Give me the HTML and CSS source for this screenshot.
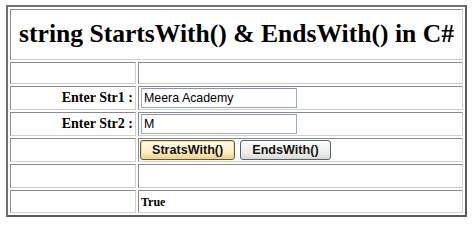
FILE: index.html
```html
<!DOCTYPE html>
<html>
<head>
<meta charset="utf-8">
<link rel="stylesheet" href="styles.css">
</head>
<body>
<div class="panel">
  <h1 class="cell title">string StartsWith() &amp; EndsWith() in C#</h1>
  <div class="cell"></div><div class="cell"></div>
  <label class="cell label" for="s1">Enter Str1 :</label>
  <div class="cell field"><input id="s1" class="text" type="text" value="Meera Academy"></div>
  <label class="cell label" for="s2">Enter Str2 :</label>
  <div class="cell field"><input id="s2" class="text" type="text" value="M"></div>
  <div class="cell"></div>
  <div class="cell field buttons">
    <button class="btn btn-hot" type="button">StratsWith()</button>
    <button class="btn" type="button">EndsWith()</button>
  </div>
  <div class="cell"></div><div class="cell"></div>
  <div class="cell"></div><div class="cell result">True</div>
</div>
</body>
</html>
```
FILE: styles.css
```css
html, body {
  margin: 0;
  padding: 0;
  background: #ffffff;
}
body {
  padding: 5px 0 0 6px;
  font-family: "Liberation Serif", "Times New Roman", serif;
}
.panel {
  display: grid;
  grid-template-columns: 126px 325px;
  grid-template-rows: 51px 22px 24px 24px 24px 24px 23px;
  gap: 2px;
  padding: 2px;
  width: max-content;
  border: 2px solid #6f6f6f;
  border-right-color: #5a5a5a;
  border-bottom-color: #5a5a5a;
}
.cell {
  box-sizing: border-box;
  margin: 0;
  border: 1px solid;
  border-color: #8a8a8a #cfcfcf #cfcfcf #8a8a8a;
  display: flex;
  align-items: center;
  padding: 0 2px;
  color: #000;
  font-family: "Liberation Serif", "Times New Roman", serif;
}
.title {
  grid-column: 1 / span 2;
  justify-content: center;
  font-size: 25.6px;
  font-weight: bold;
  padding-bottom: 2px;
}
.label {
  justify-content: flex-end;
  font-size: 14px;
  font-weight: bold;
  padding-right: 2px;
}
.field {
  padding-left: 2px;
}
.text {
  box-sizing: border-box;
  width: 156px;
  height: 20px;
  margin: 0;
  padding: 0 2px;
  border: 1px solid #9aabc0;
  border-top-color: #8696ab;
  background: #fff;
  font-family: "Liberation Sans", Arial, sans-serif;
  font-size: 12.4px;
  color: #000;
  outline: none;
}
.buttons {
  gap: 5px;
  padding-left: 1px;
}
.btn {
  box-sizing: border-box;
  height: 20px;
  margin: 0;
  padding: 0 11px;
  border: 1px solid #4f6378;
  border-radius: 3px;
  background: linear-gradient(#fdfdfb, #ecebe6 70%, #d8d7d0);
  font-family: "Liberation Sans", Arial, sans-serif;
  font-size: 12.6px;
  font-weight: bold;
  color: #111;
  line-height: 18px;
}
.btn-hot {
  border-color: #5e5a4a;
  background: linear-gradient(#fffbea, #fdefc4 60%, #f3cf7a);
  box-shadow: inset 0 0 0 1px #f8d98c;
}
.result {
  font-size: 12px;
  font-weight: bold;
  padding-top: 2px;
}
```
